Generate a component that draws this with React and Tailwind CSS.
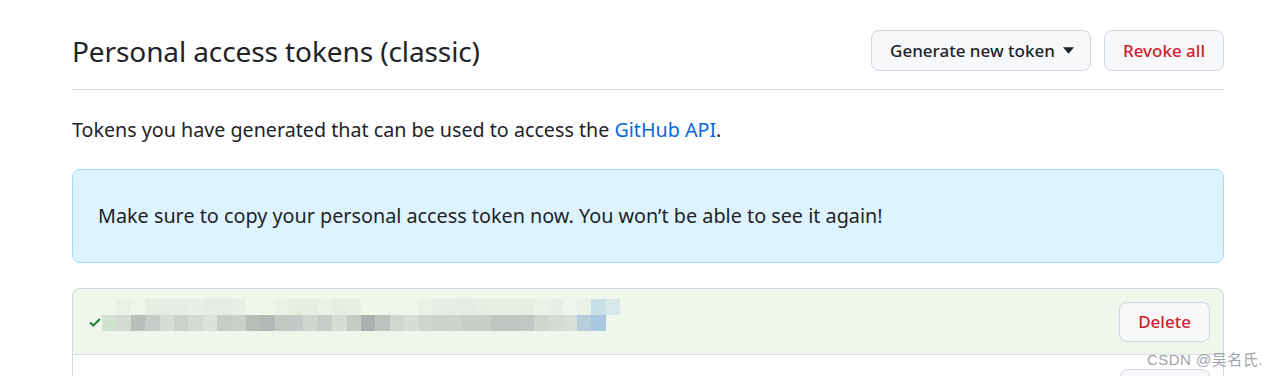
import React from "react";

const lower = [
  "#cfe3cf", "#d4dad4", "#b9c0bb", "#c6ccc7", "#d6dcd6", "#cbd1cb", "#d3d9d3", "#dce2dc",
  "#c6ccc6", "#cad0ca", "#b8bdb8", "#b1b9b6", "#c3c8c3", "#c2c9c6", "#cfd6cf", "#c6ccc7",
  "#d7ddd6", "#c6cbc5", "#aab1ae", "#bcc3bf", "#d0d6d0", "#d6dcd6", "#cfd6cf", "#cbd1cb",
  "#cdd3cd", "#c8cec8", "#c8cec8", "#bfc5c1", "#bfc5c1", "#c1c7c3", "#cfd6cf", "#d4dad4",
  "#d8ded8", "#b9ccd9", "#a9c9e2", "#eff7ec",
];

const upper = [
  "#eef6ec", "#e8f1e6", "#eef6ec", "#e6eee4", "#e4ece3", "#e4ece3", "#e8f0e6", "#e3ebe2",
  "#e3ebe2", "#e8f0e6", "#eff7ec", "#eef6ec", "#eaf2e8", "#e6eee4", "#e6eee4", "#eaf2e8",
  "#e6eee4", "#e8f0e6", "#eff7ec", "#eff7ec", "#eef6ec", "#eef6ec", "#e9f1e7", "#e6eee4",
  "#e4ece3", "#e3ebe2", "#e6eee4", "#e8f0e6", "#e8f0e6", "#e6eee4", "#eaf2e8", "#e8efe6",
  "#eef6ec", "#e9f1e8", "#c9e0e6", "#d7e7ea",
];

export default function App() {
  return (
    <div className="w-[1278px] h-[376px] overflow-hidden bg-white text-[#1f2328]" style={{ fontFamily: '"Noto Sans", "Open Sans", sans-serif' }}>
      <div className="relative ml-[72px] mr-[54px] pt-[30px]">
        {/* Subhead */}
        <div className="flex items-center justify-between border-b border-[#d8dee4] pb-[18px]">
          <h2 className="text-[28px] font-normal leading-[40px] tracking-[-0.1px]">Personal access tokens (classic)</h2>
          <div className="flex gap-[13px]">
            <button className="flex h-[41px] items-center gap-[8px] rounded-[8px] border border-[#d0d7de] bg-[#f6f8fa] pl-[18px] pr-[16px] text-[17px] font-medium">
              Generate new token
              <svg width="11" height="7" viewBox="0 0 10 6"><path d="M0 0h10L5 6z" fill="#1f2328" /></svg>
            </button>
            <button className="h-[41px] rounded-[8px] border border-[#d0d7de] bg-[#f6f8fa] px-[18px] text-[17px] font-medium text-[#cf222e]">
              Revoke all
            </button>
          </div>
        </div>

        <p className="mt-[26px] text-[19.7px] leading-[28px]">
          Tokens you have generated that can be used to access the <span className="text-[#0969da]">GitHub API</span>.
        </p>

        {/* Flash */}
        <div className="mt-[25px] flex h-[94px] items-center rounded-[8px] border border-[#a8d8fb] bg-[#ddf4ff] px-[25px] text-[19.8px]">
          Make sure to copy your personal access token now. You won’t be able to see it again!
        </div>

        {/* Token list */}
        <div className="mt-[25px] rounded-t-[8px] border border-[#d0d7de] border-b-0">
          <div className="flex h-[66px] items-center justify-between rounded-t-[8px] border-b border-[#d8dee4] bg-[#eff7ec] pl-[15px] pr-[13px]">
            <div className="mb-[14px] flex items-center">
              <svg width="14" height="14" viewBox="0 0 16 16" className="mt-[16px]">
                <path d="M2.5 7.5l3.5 3.5 7.5-7.5" stroke="#1a7f37" strokeWidth="2.4" fill="none" />
              </svg>
              <div className="flex flex-col">
                <div className="flex">
                  {upper.map((c, i) => (
                    <div key={i} className="h-[16px] w-[14.4px]" style={{ background: c }} />
                  ))}
                </div>
                <div className="flex">
                  {lower.map((c, i) => (
                    <div key={i} className="h-[16px] w-[14.4px]" style={{ background: c }} />
                  ))}
                </div>
              </div>
            </div>
            <button className="h-[40px] rounded-[8px] border border-[#d0d7de] bg-[#f6f8fa] px-[18px] text-[17px] font-medium text-[#cf222e]">
              Delete
            </button>
          </div>
          <div className="flex h-[30px] justify-end pr-[13px] pt-[14px]">
            <div className="h-[40px] w-[90px] rounded-[8px] border border-[#d0d7de] bg-[#f6f8fa]" />
          </div>
        </div>

        <div className="absolute right-[-39px] top-[349px] text-[15px] text-[#a0a4a8] tracking-[0.5px]" style={{ fontFamily: '"Liberation Sans", "Noto Sans CJK SC", sans-serif' }}>
          CSDN @吴名氏.
        </div>
      </div>
    </div>
  );
}
